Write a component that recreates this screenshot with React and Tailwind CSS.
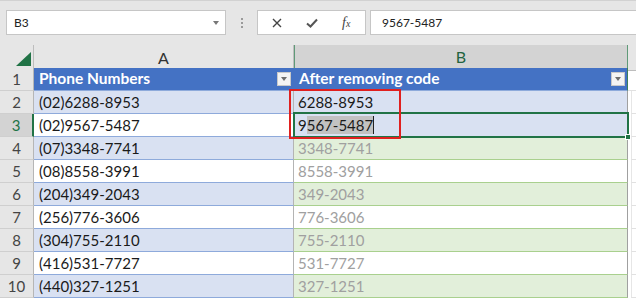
import React from "react";

const rows = [
  ["(02)6288-8953", "6288-8953"],
  ["(02)9567-5487", "9567-5487"],
  ["(07)3348-7741", "3348-7741"],
  ["(08)8558-3991", "8558-3991"],
  ["(204)349-2043", "349-2043"],
  ["(256)776-3606", "776-3606"],
  ["(304)755-2110", "755-2110"],
  ["(416)531-7727", "531-7727"],
  ["(440)327-1251", "327-1251"],
];

function FilterBtn() {
  return (
    <div className="w-[14px] h-[14px] bg-[#f4f4f4] border border-[#c9c9c9] flex items-center justify-center">
      <div className="w-0 h-0 border-l-[3.5px] border-r-[3.5px] border-t-[4px] border-l-transparent border-r-transparent border-t-[#6e6e6e]" />
    </div>
  );
}

function RowHead({ n, active }) {
  return (
    <div
      className={
        active
          ? "h-[23px] flex items-center justify-center bg-[#d3d3d3] text-[#217346] border-b border-[#cfcfcf] border-r-2 border-r-[#217346]"
          : "h-[23px] flex items-center justify-center bg-[#e6e6e6] text-[#444] border-b border-[#cfcfcf] border-r border-r-[#b6b6b6]"
      }
    >
      {n}
    </div>
  );
}

export default function App() {
  return (
    <div className="relative w-[636px] h-[298px] overflow-hidden bg-white font-['Lato',sans-serif] text-[15px] text-[#1a1a1a]">
      {/* Formula bar */}
      <div className="h-[45px] bg-[#e6e6e6] border-t border-[#d2d2d2] flex items-start pt-[9px] pl-[6px]">
        <div className="w-[220px] h-[25px] bg-white border border-[#c6c6c6] flex items-center justify-between pl-[7px] pr-[6px] text-[12px] text-[#222]">
          <span>B3</span>
          <div className="w-0 h-0 border-l-[3.5px] border-r-[3.5px] border-t-[4px] border-l-transparent border-r-transparent border-t-[#777]" />
        </div>
        <div className="w-[31px] h-[25px] flex flex-col items-center justify-center gap-[2px]">
          <div className="w-[2px] h-[2px] bg-[#9a9a9a]" />
          <div className="w-[2px] h-[2px] bg-[#9a9a9a]" />
          <div className="w-[2px] h-[2px] bg-[#9a9a9a]" />
        </div>
        <div className="w-[109px] h-[25px] bg-white border border-[#c6c6c6] flex items-center pl-[14px] gap-[24px]">
          <svg width="10" height="10" viewBox="0 0 10 10">
            <path d="M1 1 L9 9 M9 1 L1 9" stroke="#444" strokeWidth="1.4" fill="none" />
          </svg>
          <svg width="12" height="10" viewBox="0 0 12 10">
            <path d="M1 5.5 L4.5 8.5 L11 1.5" stroke="#555" strokeWidth="2" fill="none" />
          </svg>
          <span className="font-['Liberation_Serif',serif] italic text-[14px] text-[#444] leading-none">
            f<span className="text-[10px]">x</span>
          </span>
        </div>
        <div className="ml-[4px] flex-1 h-[25px] bg-white border border-[#c6c6c6] border-r-0 flex items-center pl-[11px] text-[12px] text-[#222]">
          9567-5487
        </div>
      </div>

      {/* Column headers */}
      <div className="grid grid-cols-[34px_260px_334px_1fr] h-[23px]">
        <div className="bg-[#e6e6e6] border-r border-b border-[#bdbdbd] flex justify-end items-end pr-[2px] pb-[4px]">
          <svg width="15" height="14" viewBox="0 0 15 14">
            <path d="M15 0 L15 14 L0 14 Z" fill="#217346" />
          </svg>
        </div>
        <div className="bg-[#e6e6e6] border-r border-b border-[#bdbdbd] flex items-center justify-center text-[#333] text-[16px]">
          A
        </div>
        <div className="bg-[#d3d3d3] border-x border-[#5f9a78] border-b-2 border-b-[#217346] flex items-center justify-center text-[#22633f] text-[16px]">
          B
        </div>
        <div className="bg-[#e6e6e6] border-b border-[#bdbdbd]" />
      </div>

      {/* Row 1: table header */}
      <div className="grid grid-cols-[34px_260px_334px_1fr]">
        <RowHead n={1} />
        <div className="h-[23px] bg-[#4472c4] border-b border-[#8eaadb] flex items-center justify-between pl-[5px] pr-[3px] font-bold text-white text-[15.5px]">
          <span>Phone Numbers</span>
          <FilterBtn />
        </div>
        <div className="h-[23px] bg-[#4472c4] border-b border-[#8eaadb] border-r border-r-[#3c7f59] flex items-center justify-between pl-[5px] pr-[2px] font-bold text-white text-[15.5px]">
          <span>After removing code</span>
          <FilterBtn />
        </div>
        <div className="h-[23px] border-b border-[#e1e1e1]" />
      </div>

      {/* Data rows */}
      {rows.map(([a, b], i) => {
        const blueA = i % 2 === 0;
        const isPreview = i >= 2;
        const bBg = !isPreview ? "bg-[#d9e1f2] border-[#8eaadb]" : i % 2 === 0 ? "bg-[#e2efda] border-[#a9d08e]" : "bg-white border-[#a9d08e]";
        return (
          <div key={i} className="grid grid-cols-[34px_260px_334px_1fr]">
            <RowHead n={i + 2} active={i === 1} />
            <div
              className={
                "h-[23px] border-b border-[#8eaadb] border-r border-r-[#b4b4b4] flex items-center pl-[5px] " +
                (blueA ? "bg-[#d9e1f2]" : "bg-white")
              }
            >
              {a}
            </div>
            <div
              className={
                "h-[23px] border-b border-r border-r-[#a0a0a0] flex items-center pl-[4px] " +
                bBg +
                (isPreview ? " text-[#a0a0a0]" : "")
              }
            >
              {i === 1 ? (
                <span className="flex items-center">
                  9<span className="bg-[#c2c2c2] h-[18px] flex items-center">567-5487</span>
                  <span className="w-[1px] h-[18px] bg-[#222]" />
                </span>
              ) : (
                b
              )}
            </div>
            <div className="h-[23px] border-b border-[#e1e1e1] border-l border-l-[#e6e6e6] ml-[3px]" />
          </div>
        );
      })}

      {/* Active cell B3 */}
      <div className="absolute left-[293px] top-[112px] w-[336px] h-[26px] border-2 border-[#217346]" />
      <div className="absolute left-[625px] top-[134px] w-[6px] h-[6px] bg-[#217346] border border-white" />

      {/* Red highlight box */}
      <div className="absolute left-[289px] top-[89px] w-[112px] h-[50px] border-2 border-[#e0201f]" />
    </div>
  );
}
